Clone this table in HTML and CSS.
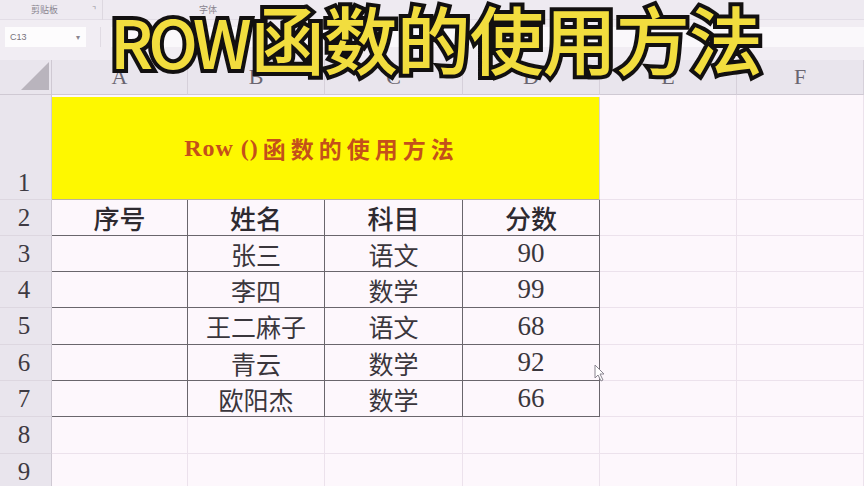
FILE: index.html
```html
<!DOCTYPE html>
<html lang="zh-CN">
<head>
<meta charset="utf-8">
<title>ROW函数的使用方法</title>
<link rel="stylesheet" href="styles.css">
</head>
<body>
<div class="app">
  <div class="ribbon">
    <span class="grp g1">剪贴板</span>
    <span class="launcher">⌝</span>
    <span class="sep"></span>
    <span class="grp g2">字体</span>
  </div>
  <div class="fbar">
    <div class="namebox"><span>C13</span><span class="dd">▾</span></div>
    <div class="fsep"></div>
    <div class="finput"></div>
  </div>
  <div class="sheet">
    <div class="corner"><svg width="28" height="28" viewBox="0 0 28 28"><polygon points="28,0 28,28 0,28" fill="#b9b4bd"/></svg></div>
    <div class="ch">A</div><div class="ch">B</div><div class="ch">C</div><div class="ch">D</div><div class="ch">E</div><div class="ch">F</div>

    <div class="rh tall">1</div>
    <div class="merged"><span class="rl">Row ()</span>函数的使用方法</div>
    <div class="c"></div><div class="c"></div>

    <div class="rh">2</div>
    <div class="c t hd">序号</div><div class="c t hd">姓名</div><div class="c t hd">科目</div><div class="c t hd">分数</div><div class="c"></div><div class="c"></div>

    <div class="rh">3</div>
    <div class="c t"></div><div class="c t">张三</div><div class="c t">语文</div><div class="c t num">90</div><div class="c"></div><div class="c"></div>

    <div class="rh">4</div>
    <div class="c t"></div><div class="c t">李四</div><div class="c t">数学</div><div class="c t num">99</div><div class="c"></div><div class="c"></div>

    <div class="rh">5</div>
    <div class="c t"></div><div class="c t">王二麻子</div><div class="c t">语文</div><div class="c t num">68</div><div class="c"></div><div class="c"></div>

    <div class="rh">6</div>
    <div class="c t"></div><div class="c t">青云</div><div class="c t">数学</div><div class="c t num">92</div><div class="c"></div><div class="c"></div>

    <div class="rh">7</div>
    <div class="c t"></div><div class="c t">欧阳杰</div><div class="c t">数学</div><div class="c t num">66</div><div class="c"></div><div class="c"></div>

    <div class="rh">8</div>
    <div class="c"></div><div class="c"></div><div class="c"></div><div class="c"></div><div class="c"></div><div class="c"></div>

    <div class="rh">9</div>
    <div class="c"></div><div class="c"></div><div class="c"></div><div class="c"></div><div class="c"></div><div class="c"></div>
  </div>
  <svg class="cursor" width="12" height="18" viewBox="0 0 12 18"><path d="M1 1 L1 14 L4 11 L7 17 L9 16 L6 10 L10 10 Z" fill="#fff" stroke="#8a8590" stroke-width="1"/></svg>
  <div class="title"><span class="latin">ROW</span>函数的使用方法</div>
</div>
</body>
</html>
```

FILE: styles.css
```css
* { box-sizing: border-box; }
html, body { margin: 0; padding: 0; }
body { width: 864px; height: 486px; overflow: hidden; background: #fdf7fc; }
.app { position: relative; width: 864px; height: 486px; overflow: hidden; }

.ribbon {
  height: 20px;
  background: #eeeaf1;
  display: flex;
  align-items: center;
  font-family: "Noto Sans CJK SC", sans-serif;
  font-size: 9px;
  color: #8a8590;
  border-bottom: 1px solid #e2dde6;
}
.g1 { margin-left: 31px; }
.launcher { margin-left: 34px; font-size: 9px; color: #9a95a0; }
.sep { width: 1px; height: 20px; background: #ddd8e0; margin-left: 6px; }
.g2 { margin-left: 96px; }

.fbar {
  height: 40px;
  background: #f1edf3;
  display: flex;
  align-items: flex-start;
  padding-top: 7px;
}
.namebox {
  margin-left: 5px;
  width: 81px;
  height: 20px;
  background: #fdfcfd;
  display: flex;
  align-items: center;
  justify-content: space-between;
  padding: 0 6px 0 5px;
  font-family: "Liberation Sans", sans-serif;
  font-size: 9px;
  color: #77727c;
}
.dd { font-size: 8px; color: #8a8590; }
.fsep { width: 1px; height: 20px; background: #e0dbe3; margin-left: 14px; }
.finput { flex: 1; height: 20px; margin-left: 10px; background: #faf8fb; }

.sheet {
  display: grid;
  grid-template-columns: 52px 136px 137px 138px 137px 137px 127px;
  grid-template-rows: 35px 105px 36px 36px 36px 37px 36px 36px 37px 37px;
  font-family: "Liberation Serif", "Noto Sans CJK SC", serif;
}
.corner {
  background: #e9e5ed;
  border-right: 1px solid #cfc9d3;
  border-bottom: 1px solid #cfc9d3;
  display: flex;
  align-items: flex-start;
  justify-content: flex-end;
  padding: 2px 2px 0 0;
}
.ch {
  background: #e9e5ed;
  border-right: 1px solid #d6d0da;
  border-bottom: 1px solid #cfc9d3;
  display: flex;
  align-items: flex-end;
  justify-content: center;
  padding-bottom: 4px;
  font-size: 22px;
  color: #6a6570;
}
.rh {
  background: #e9e5ed;
  border-right: 1px solid #cfc9d3;
  border-bottom: 1px solid #ddd7e0;
  display: flex;
  align-items: center;
  justify-content: center;
  font-size: 25px;
  color: #3e3a42;
  padding-right: 3px;
}
.rh.tall { align-items: flex-end; padding-bottom: 2px; }
.merged {
  grid-column: 2 / 6;
  background: #fef800;
  margin-top: 2px;
  display: flex;
  align-items: center;
  justify-content: center;
  padding-right: 8px;
  font-family: "Noto Sans CJK SC", sans-serif;
  font-weight: 700;
  font-size: 23px;
  letter-spacing: 5px;
  color: #c4501a;
  border-right: 1px solid #d8d0d8;
  border-bottom: 1px solid #b8b0a0;
}
.rl {
  font-family: "Liberation Serif", serif;
  font-size: 24px;
  letter-spacing: 1px;
  margin-right: 4px;
}
.c {
  background: #fdf7fc;
  border-right: 1px solid #ece2ec;
  border-bottom: 1px solid #ece2ec;
  display: flex;
  align-items: center;
  justify-content: center;
  font-family: "Noto Sans CJK SC", sans-serif;
  font-size: 25px;
  color: #3a363c;
}
.c.t {
  border-right: 1.5px solid #6a666c;
  border-bottom: 1.5px solid #6a666c;
}
.c.hd { font-weight: 500; font-size: 26px; color: #2e2a30; }
.c.num { font-family: "Liberation Serif", serif; font-size: 27px; }

.cursor { position: absolute; left: 594px; top: 364px; }

.title {
  position: absolute;
  left: 110px;
  top: -8px;
  font-family: "Noto Sans CJK SC", sans-serif;
  font-weight: 500;
  font-size: 74px;
  line-height: 90px;
  color: #f2dd3e;
  -webkit-text-stroke: 8px #121010;
  paint-order: stroke fill;
  white-space: nowrap;
  letter-spacing: -1px;
}
.latin { font-size: 66px; letter-spacing: -5px; margin-right: 4px; }
```
